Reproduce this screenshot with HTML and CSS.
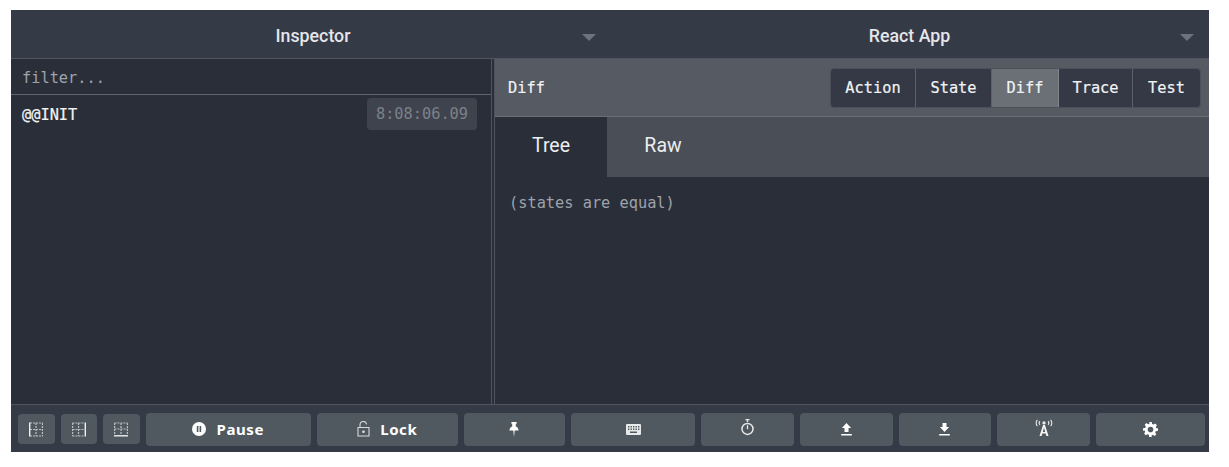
FILE: index.html
```html
<!DOCTYPE html>
<html lang="en">
<head>
<meta charset="utf-8">
<title>Redux DevTools</title>
<link rel="stylesheet" href="styles.css">
</head>
<body>
<div class="app">
  <header class="top">
    <div class="select select-left"><span class="select-label">Inspector</span><span class="caret"></span></div>
    <div class="select select-right"><span class="select-label">React App</span><span class="caret"></span></div>
  </header>
  <main class="panes">
    <section class="left">
      <div class="filter">filter...</div>
      <div class="action-row"><span class="action-name">@@INIT</span><span class="time">8:08:06.09</span></div>
    </section>
    <section class="right">
      <div class="bar">
        <span class="bar-title">Diff</span>
        <div class="seg">
          <span class="seg-item seg-action">Action</span>
          <span class="seg-item seg-state">State</span>
          <span class="seg-item seg-diff is-active">Diff</span>
          <span class="seg-item seg-trace">Trace</span>
          <span class="seg-item seg-test">Test</span>
        </div>
      </div>
      <div class="tabs">
        <span class="tab is-current">Tree</span>
        <span class="tab">Raw</span>
      </div>
      <div class="content">(states are equal)</div>
    </section>
  </main>
  <footer class="foot">
    <button class="btn w-dock"><svg class="ic" width="14" height="15" viewBox="0 0 14 15"><g fill="none" stroke="#dfe1e2" stroke-opacity=".75" stroke-width="1.200" stroke-dasharray="2 1"><path d="M1 1h13M1 7.500h13M1 14h13M7 1v13M13.400 1v13"/></g><path stroke="#f0f0f1" stroke-width="1.400" fill="none" d="M.7 .5v14"/></svg></button>
    <button class="btn w-dock"><svg class="ic" width="14" height="15" viewBox="0 0 14 15"><g fill="none" stroke="#dfe1e2" stroke-opacity=".75" stroke-width="1.200" stroke-dasharray="2 1"><path d="M.5 1h12M.5 7.500h12M.5 14h12M.6 1v13M6.500 1v13"/></g><path stroke="#f0f0f1" stroke-width="1.400" fill="none" d="M13.300 .5v14"/></svg></button>
    <button class="btn w-dock"><svg class="ic" width="14" height="15" viewBox="0 0 14 15"><g fill="none" stroke="#dfe1e2" stroke-opacity=".75" stroke-width="1.200" stroke-dasharray="2 1"><path d="M.5 1h13M.5 7h13M.6 1v11M13.400 1v11M7 1v11"/></g><path stroke="#f0f0f1" stroke-width="1.400" fill="none" d="M0 13.800h14"/></svg></button>
    <button class="btn w-pause"><svg class="ic" width="14" height="14" viewBox="0 0 14 14"><circle cx="7" cy="7" r="7" fill="#fff"/><path fill="#50595f" d="M4.800 4h1.600v6H4.800zM7.600 4h1.600v6H7.600z"/></svg><span>Pause</span></button>
    <button class="btn w-lock"><svg class="ic" width="13" height="16" viewBox="0 0 13 16"><path fill="none" stroke="#d8dadc" stroke-width="1.100" d="M3 6.500V4a3.300 3.300 0 0 1 6.600-.6M1 6.500h11v8.500H1z"/><circle cx="6.500" cy="10.700" r="1.300" fill="#e6e7e8"/></svg><span>Lock</span></button>
    <button class="btn w-pin"><svg class="ic" width="10" height="15" viewBox="0 0 10 15"><path fill="#fff" d="M2.400 0h5.200v1.800H6.800v2.800c1.700.7 2.700 1.900 2.700 3.800H5.700L5 15l-.7-6.600H.5c0-1.900 1-3.100 2.700-3.800V1.800h-.8z"/></svg></button>
    <button class="btn w-key"><svg class="ic" width="15" height="11" viewBox="0 0 15 11"><path fill="#e8e9ea" fill-rule="evenodd" d="M1 0h13a1 1 0 0 1 1 1v9a1 1 0 0 1-1 1H1a1 1 0 0 1-1-1V1a1 1 0 0 1 1-1zM2 2v1.400h1.400V2zM4.500 2v1.400h1.400V2zM7 2v1.400h1.400V2zM9.500 2v1.400h1.400V2zM12 2v1.400h1.400V2zM2 4.500v1.400h1.400V4.500zM4.500 4.500v1.400h1.400V4.500zM7 4.500v1.400h1.400V4.500zM9.500 4.500v1.400h1.400V4.500zM12 4.500v1.400h1.400V4.500zM4 7.500v1.500h7V7.500z"/></svg></button>
    <button class="btn w-icon"><svg class="ic ic-up" width="13" height="17" viewBox="0 0 13 17"><path fill="#e8e9ea" d="M4.500 0h4v1.300H7.200v1.600H5.800V1.300H4.500z"/><circle cx="6.500" cy="9.900" r="5.500" fill="none" stroke="#e8e9ea" stroke-width="1.500"/><path stroke="#e8e9ea" stroke-width="1.300" d="M6.500 6.300v3.900"/></svg></button>
    <button class="btn w-icon"><svg class="ic" width="11" height="13" viewBox="0 0 11 13"><path fill="#fff" d="M5.500 0l4.600 5H7.500v4h-4V5H.9zM.2 11h10.600v1.500H.2z"/></svg></button>
    <button class="btn w-icon"><svg class="ic" width="11" height="13" viewBox="0 0 11 13"><path fill="#fff" d="M3.500 0h4v4h2.600L5.500 9 .9 4h2.600zM.2 11h10.600v1.500H.2z"/></svg></button>
    <button class="btn w-icon"><svg class="ic ic-up" width="18" height="17" viewBox="0 0 18 17"><g fill="none" stroke="#e8e9ea" stroke-width="1.100"><path d="M2.400 .8c-1.600 1.700-1.600 4.600 0 6.300M15.600 .8c1.600 1.700 1.600 4.600 0 6.300M4.900 2.100c-.9 1-.9 2.700 0 3.700M13.100 2.100c.9 1 .9 2.700 0 3.700"/></g><circle cx="9" cy="3.900" r="1.700" fill="#e8e9ea"/><path fill="#f4f4f5" fill-rule="evenodd" d="M8 6h2l3.500 11h-2.100l-.7-2.500H7.300L6.600 17H4.500zM9 8.800L7.800 13h2.400z"/></svg></button>
    <button class="btn w-gear"><svg class="ic" width="15" height="15" viewBox="0 0 24 24"><path fill="#fff" fill-rule="evenodd" d="M10 0h4l.6 3.200 2.200.9 2.700-1.800 2.800 2.800-1.800 2.700.9 2.200L24 10v4l-3.600.6-.9 2.200 1.800 2.700-2.800 2.800-2.700-1.800-2.200.9L14 24h-4l-.6-3.600-2.200-.9-2.700 1.800-2.800-2.800 1.800-2.700-.9-2.200L0 14v-4l3.600-.6.9-2.200L2.700 4.500l2.800-2.800 2.700 1.800 2.200-.9zM12 7.500a4.500 4.500 0 1 0 0 9 4.500 4.500 0 0 0 0-9z"/></svg></button>
  </footer>
</div>
</body>
</html>
```
FILE: styles.css
```css
* { box-sizing: border-box; }
html, body { margin: 0; padding: 0; background: #fff; }
body { padding: 10px 20px 15px 11px; height: 467px; }
.app { width: 1198px; height: 442px; display: flex; flex-direction: column; background: #2a2e39; color: #fff; font-family: "DejaVu Sans Mono", monospace; font-size: 15.300px; overflow: hidden; }

.top { height: 49px; display: flex; background: #353a47; border-bottom: 1px solid #4f5560; flex: none; }
.select { display: flex; align-items: center; position: relative; font: 500 17.800px Roboto, sans-serif; color: #e4e6ea; padding-top: 3px; }
.select-left { width: 593px; justify-content: center; padding-left: 11px; }
.select-right { width: 605px; justify-content: center; padding-left: 6px; }
.select-label { display: block; }
.caret { position: absolute; top: 24px; width: 0; height: 0; border-style: solid; border-width: 7px 7.500px 0; border-color: #6d737d transparent transparent; }
.select-right .caret { right: 15px; }
.select-left .caret { right: 8px; }

.panes { flex: 1; display: flex; min-height: 0; }
.left { width: 481px; flex: none; border-right: 1px solid #4f5560; }
.filter { height: 36px; padding: 2px 11px 0; display: flex; align-items: center; color: #9fa4ab; border-bottom: 1px solid #5f646d; }
.action-row { height: 39px; padding: 3px 14px 0 11px; display: flex; justify-content: space-between; align-items: flex-start; }
.action-name { line-height: 30px; margin-top: 2px; color: #f2f3f4; -webkit-text-stroke: .2px #f2f3f4; }
.time { height: 32px; width: 110px; border-radius: 4px; background: #3f434e; color: #7c8189; line-height: 32px; text-align: center; }

.right { flex: 1; min-width: 0; margin-left: 2px; border-left: 1px solid #4f5560; display: flex; flex-direction: column; }
.bar { height: 58px; flex: none; display: flex; align-items: center; justify-content: space-between; background: #565a62; padding: 0 8px 0 13px; border-bottom: 1px solid #6a6e75; }
.bar-title { color: #f2f3f4; -webkit-text-stroke: .2px #f2f3f4; }
.seg { display: flex; height: 40px; border: 1px solid #4b505a; border-radius: 4px; overflow: hidden; background: #343945; margin-top: 1px; }
.seg-item { display: flex; align-items: center; justify-content: center; color: #f2f3f4; border-right: 1px solid #5c6069; -webkit-text-stroke: .2px #f2f3f4; }
.seg-item:last-child { border-right: 0; }
.seg-action { width: 85px; }
.seg-state { width: 76px; }
.seg-diff { width: 67px; }
.seg-trace { width: 74px; }
.seg-test { width: 67px; }
.is-active { background: #6b6f76; border-color: #81858b; }

.tabs { height: 60px; flex: none; display: flex; background: #4a4e57; }
.tab { width: 112px; display: flex; align-items: center; justify-content: center; font: 400 19.500px Roboto, sans-serif; color: #eceef0; padding-bottom: 4px; }
.tab.is-current { background: #2a2e39; }
.content { padding: 17px 14px; color: #9ea3aa; }

.foot { height: 48px; flex: none; display: flex; align-items: center; gap: 6px; padding: 0 4px 0 7px; background: #353a47; border-top: 1px solid #4f5560; }
.btn { height: 33px; border: 0; border-radius: 4px; padding: 0; margin-top: 1px; background: #50595f; color: #fff; display: flex; align-items: center; justify-content: center; gap: 10px; font: 700 15px "Noto Sans", sans-serif; letter-spacing: .6px; }
.ic { display: block; flex: none; }
.ic-up { margin-bottom: 4px; }
.w-dock { width: 36.500px; height: 30px; }
.w-pause { width: 165.500px; }
.w-lock { width: 140.500px; }
.w-pin { width: 101.500px; }
.w-key { width: 124px; }
.w-icon { width: 92.750px; }
.w-gear { width: 109px; }
```
